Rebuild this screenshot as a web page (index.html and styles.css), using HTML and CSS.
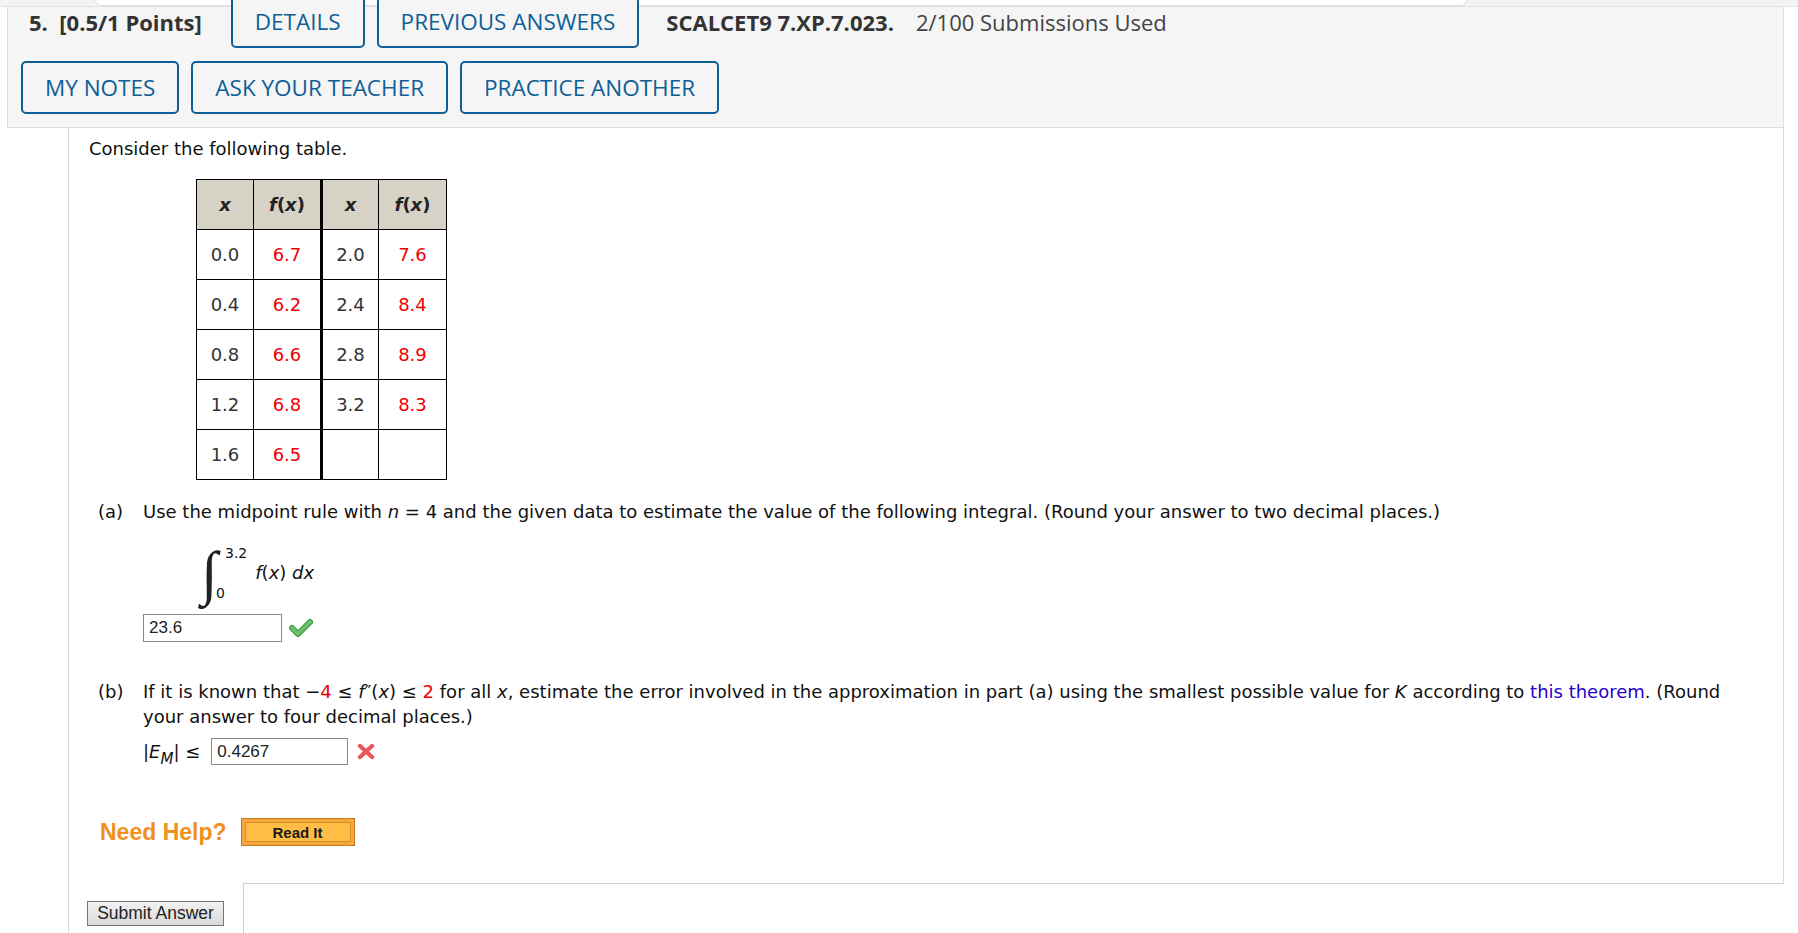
FILE: index.html
```html
<!DOCTYPE html>
<html lang="en">
<head>
    <meta charset="UTF-8">
    <title>SCALCET9 7.XP.7.023</title>
    <link rel="stylesheet" href="styles.css">
</head>
<body>
    <div class="top-strip"><div class="top-strip-box"></div></div>

    <div class="question">
        <div class="q-head">
            <div class="q-row q-row-top">
                <span class="q-num">5.&nbsp; [0.5/1 Points]</span>
                <a class="q-btn">DETAILS</a>
                <a class="q-btn">PREVIOUS ANSWERS</a>
                <span class="q-code">SCALCET9 7.XP.7.023.</span>
                <span class="q-subs">2/100 Submissions Used</span>
            </div>
            <div class="q-row">
                <a class="q-btn">MY NOTES</a>
                <a class="q-btn">ASK YOUR TEACHER</a>
                <a class="q-btn">PRACTICE ANOTHER</a>
            </div>
        </div>

        <div class="q-body">
            <p class="intro">Consider the following table.</p>

            <table class="fx-table">
                <tr>
                    <th class="col-x"><em>x</em></th>
                    <th class="col-f"><em>f</em>(<em>x</em>)</th>
                    <th class="col-x split"><em>x</em></th>
                    <th class="col-f"><em>f</em>(<em>x</em>)</th>
                </tr>
                <tr><td>0.0</td><td class="val">6.7</td><td class="split">2.0</td><td class="val">7.6</td></tr>
                <tr><td>0.4</td><td class="val">6.2</td><td class="split">2.4</td><td class="val">8.4</td></tr>
                <tr><td>0.8</td><td class="val">6.6</td><td class="split">2.8</td><td class="val">8.9</td></tr>
                <tr><td>1.2</td><td class="val">6.8</td><td class="split">3.2</td><td class="val">8.3</td></tr>
                <tr><td>1.6</td><td class="val">6.5</td><td class="split"></td><td></td></tr>
            </table>

            <div class="part part-a">
                <span class="part-label">(a)</span>
                <div class="part-text">
                    Use the midpoint rule with <em>n</em> = 4 and the given data to estimate the value of the following integral. (Round your answer to two decimal places.)
                    <div class="integral">
                        <span class="int-sign">∫</span>
                        <span class="int-limits">
                            <span class="int-up">3.2</span>
                            <span class="int-low">0</span>
                        </span>
                        <span class="int-body"><em>f</em>(<em>x</em>) <em>dx</em></span>
                    </div>
                    <div class="answer-row">
                        <input class="answer" type="text" value="23.6">
                        <svg class="mark-ok" width="24" height="18" viewBox="0 0 24 18">
                            <polyline points="3,9 9,15 21,3" fill="none" stroke="#3f9a3f" stroke-width="6" stroke-linecap="round" stroke-linejoin="round"/>
                            <polyline points="3,9 9,15 21,3" fill="none" stroke="#6cc26c" stroke-width="3.6" stroke-linecap="round" stroke-linejoin="round"/>
                        </svg>
                    </div>
                </div>
            </div>

            <div class="part part-b">
                <span class="part-label">(b)</span>
                <div class="part-text">
                    If it is known that &minus;<span class="red">4</span> &le; <em>f</em>&Prime;(<em>x</em>) &le; <span class="red">2</span> for all <em>x</em>, estimate the error involved in the approximation in part (a) using the smallest possible value for <em>K</em> according to <a class="theorem">this theorem</a>. (Round your answer to four decimal places.)
                    <div class="answer-row em-row">
                        <span class="em-label">|<em>E</em><sub><em>M</em></sub>| &le;</span>
                        <input class="answer answer-b" type="text" value="0.4267">
                        <svg class="mark-bad" width="20" height="17" viewBox="0 0 20 17">
                            <path d="M4 3 L16 14 M16 3 L4 14" fill="none" stroke="#e8585c" stroke-width="4.4" stroke-linecap="round"/>
                        </svg>
                    </div>
                </div>
            </div>

            <div class="help-row">
                <span class="need-help">Need Help?</span>
                <a class="read-it"><span>Read It</span></a>
            </div>
        </div>

        <div class="q-foot">
            <div class="submit-cell">
                <button class="submit-btn">Submit Answer</button>
            </div>
            <div class="foot-rest"></div>
        </div>
    </div>
</body>
</html>
```

FILE: styles.css
```css
:root {
    --wa-blue: #0d5f96;
    --panel-gray: #f5f5f5;
    --line-gray: #d8d8d8;
}

* {
    box-sizing: border-box;
}

body {
    margin: 0;
    background-color: #fff;
    color: #111;
    font-family: "DejaVu Sans", Verdana, sans-serif;
    overflow: hidden;
}

/* sticky toolbar edge peeking in at the top */
.top-strip {
    position: absolute;
    top: 0;
    left: 0;
    right: 0;
    height: 7px;
    background-color: #f3f3f3;
    border-bottom: 1px solid #e2e2e2;
    z-index: 1;
}

.top-strip-box {
    margin-left: 95px;
    width: 1372px;
    height: 6px;
    background-color: #fff;
    border: 1px solid #e0e0e0;
    border-top: none;
    border-radius: 0 0 9px 9px;
}

.question {
    width: 1777px;
    margin-left: 7px;
}

/* header panel */
.q-head {
    margin-top: 6px;
    background-color: var(--panel-gray);
    border: 1px solid #dcdcdc;
    padding: 0 13px 13px;
    font-family: "Open Sans", sans-serif;
}

.q-row {
    display: flex;
    align-items: center;
    gap: 12px;
}

.q-row-top {
    margin-top: -12px;
}

.q-row + .q-row {
    margin-top: 13px;
}

.q-num {
    margin: 0 17px 0 8px;
    font-size: 22px;
    font-weight: 700;
    color: #333;
}

.q-btn {
    position: relative;
    z-index: 2;
    display: inline-flex;
    align-items: center;
    height: 53px;
    padding: 0 22px;
    border: 2px solid var(--wa-blue);
    border-radius: 5px;
    background-color: var(--panel-gray);
    color: var(--wa-blue);
    font-size: 22.5px;
    font-weight: 500;
    text-decoration: none;
    cursor: pointer;
}

.q-code {
    margin-left: 15px;
    font-size: 22px;
    font-weight: 700;
    color: #333;
}

.q-subs {
    margin-left: 10px;
    font-size: 22px;
    color: #444;
}

/* question body */
.q-body {
    margin-left: 61px;
    border-left: 1px solid var(--line-gray);
    border-right: 1px solid var(--line-gray);
    padding: 8px 30px 37px 20px;
    font-size: 18px;
    line-height: 25px;
}

.intro {
    margin: 0;
}

.fx-table {
    border-collapse: collapse;
    margin: 18px 0 0 107px;
    font-size: 18px;
}

.fx-table th,
.fx-table td {
    border: 1px solid #000;
    height: 50px;
    padding: 0;
    text-align: center;
    color: #333;
}

.fx-table th {
    background-color: #d7d2c6;
    font-weight: bold;
    color: #222;
}

.fx-table .col-x {
    width: 57px;
}

.fx-table .col-f {
    width: 68px;
}

.fx-table .split {
    border-left: 3px solid #000;
}

.fx-table .val {
    color: #ee0000;
}

.part {
    display: grid;
    grid-template-columns: 45px 1fr;
    margin-left: 9px;
}

.part-a {
    margin-top: 19px;
}

.part-b {
    margin-top: 37px;
}

.integral {
    display: flex;
    align-items: center;
    height: 54px;
    margin: 22px 0 0 58px;
}

.int-sign {
    width: 16px;
    font-family: "Liberation Serif", serif;
    font-size: 60px;
    line-height: 54px;
    color: #222;
}

.int-limits {
    display: flex;
    flex-direction: column;
    justify-content: space-between;
    height: 56px;
    font-size: 14px;
    line-height: 16px;
}

.int-up {
    margin-left: 8px;
}

.int-low {
    margin-left: -1px;
}

.int-body {
    margin: 0 0 2px 8px;
}

.answer-row {
    display: flex;
    align-items: center;
    gap: 7px;
    margin-top: 14px;
}

.answer {
    width: 139px;
    height: 28px;
    padding: 0 5px;
    border: 1px solid #8a8a8a;
    font-family: "Liberation Sans", Arial, sans-serif;
    font-size: 17px;
    color: #222;
}

.answer-b {
    width: 137px;
    height: 27px;
}

.em-row {
    margin-top: 9px;
    gap: 8px;
}

.em-label {
    margin-right: 3px;
}

.em-label sub {
    font-size: 15px;
    vertical-align: -6px;
    line-height: 0;
}

.red {
    color: #ee0000;
}

.theorem {
    color: #2400cc;
    text-decoration: none;
}

.help-row {
    display: flex;
    align-items: center;
    gap: 14px;
    margin: 53px 0 0 11px;
}

.need-help {
    font-family: "Liberation Sans", Arial, sans-serif;
    font-size: 23px;
    font-weight: bold;
    color: #f0901e;
}

.read-it {
    display: flex;
    width: 114px;
    height: 28px;
    padding: 3px;
    border: 1px solid #c4781f;
    background-color: #f9a73a;
    cursor: pointer;
}

.read-it span {
    flex: 1;
    display: flex;
    align-items: center;
    justify-content: center;
    border: 1px solid #d98e2c;
    background-color: #ffbd45;
    font-family: "Liberation Sans", Arial, sans-serif;
    font-size: 15px;
    font-weight: bold;
    color: #1a1a1a;
}

/* footer */
.q-foot {
    display: flex;
    margin-left: 61px;
    border-left: 1px solid var(--line-gray);
}

.submit-cell {
    width: 174px;
    padding: 18px 0 0 18px;
}

.submit-btn {
    width: 137px;
    height: 25px;
    padding: 0;
    border: 1px solid #767676;
    background: linear-gradient(#f2f2f2, #dadada);
    font-family: "Liberation Sans", Arial, sans-serif;
    font-size: 17.5px;
    color: #222;
}

.foot-rest {
    flex: 1;
    height: 60px;
    border-top: 1px solid #cfcfcf;
    border-left: 1px solid #cfcfcf;
}
```
